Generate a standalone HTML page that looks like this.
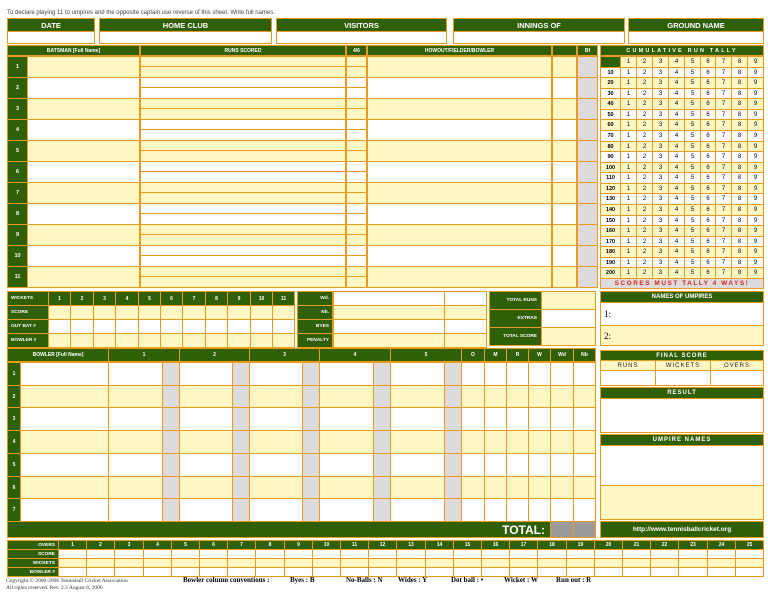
<!DOCTYPE html>
<html><head><meta charset="utf-8">
<style>
html,body{margin:0;padding:0;background:#fff;width:768px;height:594px;overflow:hidden;position:relative;font-family:"Liberation Sans",sans-serif;}
.b{position:absolute;box-sizing:border-box;border:1px solid #eb9a1c;display:flex;align-items:center;justify-content:center;overflow:hidden;white-space:nowrap;}
.g{background:#2f5f07;color:#fff;font-weight:bold;}
.y{background:#fff8c4;}
.w{background:#fff;}
.k{background:#dcdcdc;}
.d{background:#9a9a9a;}
.t{position:absolute;white-space:nowrap;}
</style></head><body>
<div class="t" style="left:7px;top:10px;font-size:6px;color:#444;">To declare playing 11 to umpires and the opposite captain use reverse of this sheet. Write full names.</div>
<script>
function B(x,y,w,h,c,txt,fs,st){var d=document.createElement('div');d.className='b '+c;d.style.left=x+'px';d.style.top=y+'px';d.style.width=w+'px';d.style.height=h+'px';if(txt!==undefined&&txt!==''){d.textContent=txt;d.style.fontSize=(fs||5)+'px';}if(st)d.style.cssText+=st;document.body.appendChild(d);return d;}
var H=[[7,88,'DATE'],[99,173,'HOME CLUB'],[276,171,'VISITORS'],[453,172,'INNINGS OF'],[628,136,'GROUND NAME']];
H.forEach(function(h){B(h[0],18,h[1],14,'g',h[2],7.5);B(h[0],31,h[1],13,'w');});
var bc=[[7,133,'BATSMAN [Full Name]'],[140,206,'RUNS SCORED'],[346,21,'4/6'],[367,185,'HOWOUT/FIELDER/BOWLER'],[552,25,''],[577,21,'Bf']];
bc.forEach(function(c){B(c[0],45,c[1],11,'g',c[2],5);});
var y0=56,rh=21;
for(var i=0;i<11;i++){var y=y0+i*rh,c=i%2==0?'y':'w';
 B(7,y,21,rh+1,'g',String(i+1),5.5);
 B(27,y,113,rh+1,c);
 B(140,y,206,11,c);B(140,y+10,206,rh+1-10,c);
 B(346,y,21,11,c);B(346,y+10,21,rh+1-10,c);
 B(367,y,185,rh+1,c);B(552,y,25,rh+1,c);B(577,y,21,rh+1,'k');}
B(600,45,164,11,'g','CUMULATIVE RUN TALLY',5.5,'letter-spacing:2.2px;');
var th=(278-56)/21;
for(var r=0;r<21;r++){var y=Math.round(56+r*th),h=Math.round(56+(r+1)*th)-y+1,c=r%2==0?'y':'w';
 B(600,y,21,h,r==0?'g':c,r==0?'':String(r*10),5.5,'font-weight:bold;');
 for(var j=0;j<9;j++){var x=Math.round(620+j*15.9);B(x,y,Math.round(620+(j+1)*15.9)-x+1,h,c,String(j+1),6);}}
B(600,278,164,11,'k','SCORES MUST TALLY 4 WAYS!',6.5,'color:#e02020;font-weight:bold;letter-spacing:1.5px;');
var wl=['WICKETS','SCORE','OUT BAT #','BOWLER #'];
for(var r=0;r<4;r++){var y=291+r*14;B(7,y,42,15,'g',wl[r],4.8,'justify-content:flex-start;padding-left:3px;');
 for(var j=0;j<11;j++){var x=Math.round(48+j*22.4);B(x,y,Math.round(48+(j+1)*22.4)-x+1,15,r==0?'g':(r==2?'w':'y'),r==0?String(j+1):'',5);}}
var el=['Wd.','Nb.','BYES','PENALTY'];
for(var r=0;r<4;r++){var y=291+r*14,c=r%2==0?'w':'y';B(297,y,36,15,'g',el[r],4.8,'justify-content:flex-end;padding-right:3px;');B(333,y,112,15,c);B(444,y,43,15,c);}
var tl=['TOTAL RUNS','EXTRAS','TOTAL SCORE'];
for(var r=0;r<3;r++){var y=291+r*18;B(489,y,53,19,'g',tl[r],4.8,'justify-content:flex-end;padding-right:4px;');B(541,y,55,19,r==1?'w':'y');}
B(600,291,164,12,'g','NAMES OF UMPIRES',6,'font-weight:bold;');
B(600,302,164,24,'w','1:',9,'justify-content:flex-start;padding-left:3px;font-family:Liberation Serif,serif;');
B(600,325,164,21,'y','2:',9,'justify-content:flex-start;padding-left:3px;font-family:Liberation Serif,serif;');
var bx=[[7,102,'BOWLER [Full Name]'],[108,72,'1'],[179,71,'2'],[249,71,'3'],[319,72,'4'],[390,72,'5'],[461,24,'O'],[484,23,'M'],[506,23,'R'],[528,23,'W'],[550,24,'Wd'],[573,23,'Nb']];
bx.forEach(function(c){B(c[0],348,c[1],14,'g',c[2],5);});
var bh=(521-362)/7;
for(var r=0;r<7;r++){var y=Math.round(362+r*bh),h=Math.round(362+(r+1)*bh)-y+1,c=r%2==0?'w':'y';
 B(7,y,14,h,'g',String(r+1),5);B(20,y,89,h,c);
 for(var k=1;k<=5;k++){var x=bx[k][0],w=bx[k][1];B(x,y,w-17,h,c);B(x+w-18,y,18,h,'k');}
 for(var k=6;k<12;k++)B(bx[k][0],y,bx[k][1],h,c);}
B(7,521,544,17,'g','TOTAL:',12,'justify-content:flex-end;padding-right:5px;');
B(550,521,24,17,'d');B(573,521,23,17,'d');
B(600,350,164,11,'g','FINAL SCORE',6,'letter-spacing:1px;');
var fx=[600,655,710,764];var fl=['RUNS','WICKETS','OVERS'];
for(var k=0;k<3;k++){B(fx[k],360,fx[k+1]-fx[k]+(k<2?1:0),11,'y',fl[k],6,'letter-spacing:1px;color:#222;');B(fx[k],370,fx[k+1]-fx[k]+(k<2?1:0),16,'w');}
B(600,387,164,12,'g','RESULT',6,'letter-spacing:1px;');
B(600,398,164,35,'w');
B(600,434,164,12,'g','UMPIRE NAMES',6,'letter-spacing:1px;');
B(600,445,164,41,'w');B(600,485,164,35,'y');
B(600,521,164,17,'g','http://www.tennisballcricket.org',6.5);
var ol=['OVERS','SCORE','WICKETS','BOWLER #'];
for(var r=0;r<4;r++){var y=540+r*9,c=['g','w','y','w'][r];B(7,y,52,10,'g',ol[r],4.8,'justify-content:flex-end;padding-right:3px;');
 for(var j=0;j<25;j++){var x=Math.round(58+j*28.2);B(x,y,Math.round(58+(j+1)*28.2)-x+1,10,c,r==0?String(j+1):'',5);}}
</script>
<div class="t" style="left:6px;top:578px;font-size:5.5px;line-height:7px;color:#333;font-family:'Liberation Serif',serif;">Copyright © 2000-2006 Tennisball Cricket Association<br>All rights reserved. Rev. 2.3 August 8, 2006</div>
<div class="t" style="left:183px;top:576px;font-size:7px;font-weight:bold;font-family:'Liberation Serif',serif;">Bowler column conventions :</div>
<div class="t" style="left:290px;top:576px;font-size:7px;font-weight:bold;font-family:'Liberation Serif',serif;">Byes : B</div>
<div class="t" style="left:346px;top:576px;font-size:7px;font-weight:bold;font-family:'Liberation Serif',serif;">No-Balls : N</div>
<div class="t" style="left:398px;top:576px;font-size:7px;font-weight:bold;font-family:'Liberation Serif',serif;">Wides : Y</div>
<div class="t" style="left:451px;top:576px;font-size:7px;font-weight:bold;font-family:'Liberation Serif',serif;">Dot ball : •</div>
<div class="t" style="left:504px;top:576px;font-size:7px;font-weight:bold;font-family:'Liberation Serif',serif;">Wicket : W</div>
<div class="t" style="left:556px;top:576px;font-size:7px;font-weight:bold;font-family:'Liberation Serif',serif;">Run out : R</div>
</body></html>
